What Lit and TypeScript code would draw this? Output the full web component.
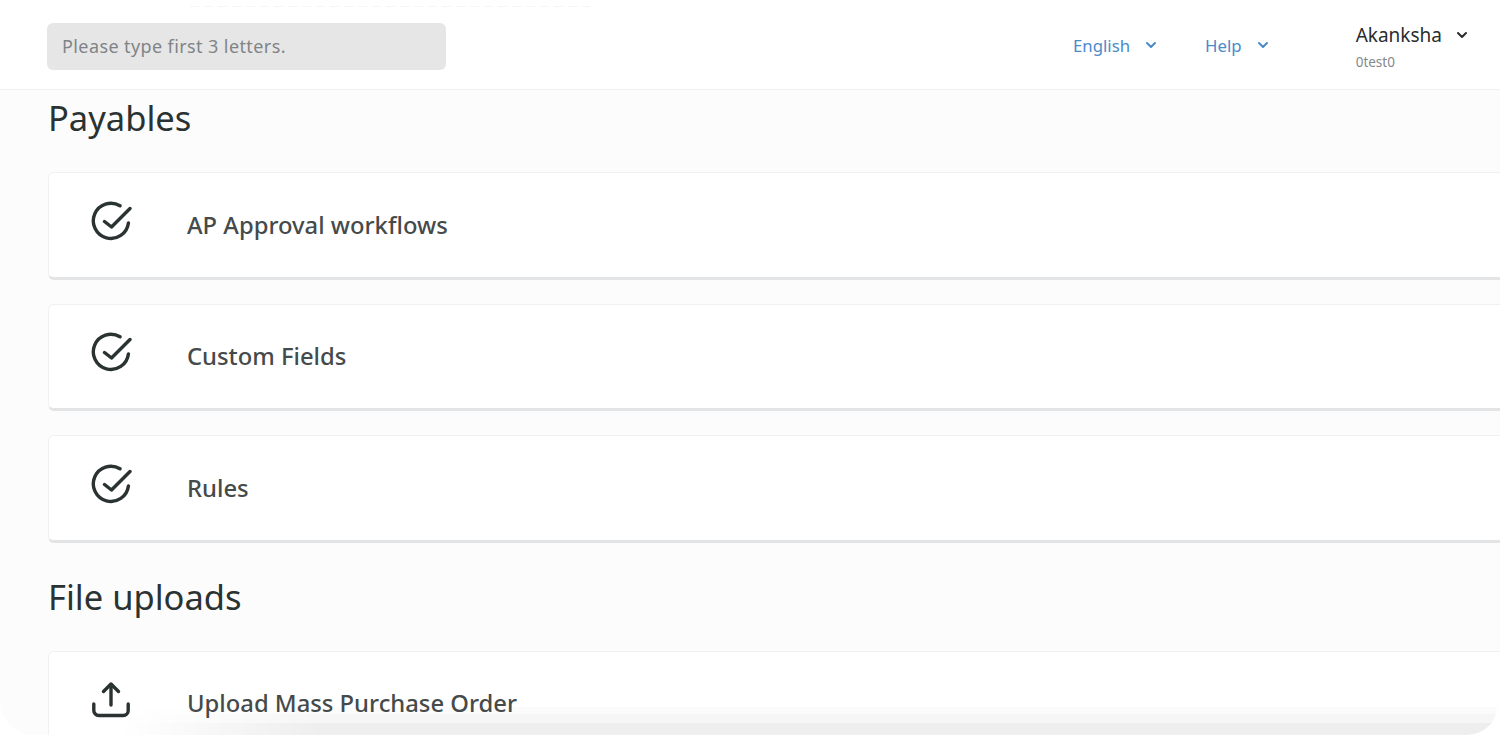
import { LitElement, css, html } from "lit";
import { customElement } from "lit/decorators.js";

const checkIcon = html`<svg class="icon" viewBox="0 0 42 42" fill="none" stroke="currentColor" stroke-width="3.4" stroke-linecap="round" stroke-linejoin="round">
  <path d="M30 5.8A17.6 17.6 0 1 0 38.4 23" />
  <path d="M14.5 21.5l7 5.5L40 8.5" />
</svg>`;

const uploadIcon = html`<svg class="icon" viewBox="0 0 42 42" fill="none" stroke="currentColor" stroke-width="3.4" stroke-linecap="round" stroke-linejoin="round">
  <path d="M21 27V6.5" />
  <path d="M13.5 13.5L21 6l7.5 7.5" />
  <path d="M3.8 26v6.5a5 5 0 0 0 5 5h24.4a5 5 0 0 0 5-5V26" />
</svg>`;

const chevron = html`<svg class="chevron" viewBox="0 0 12 8" fill="none" stroke="currentColor" stroke-width="2" stroke-linecap="round" stroke-linejoin="round">
  <path d="M2 2l4 4 4-4" />
</svg>`;

const sections = [
  {
    title: "Payables",
    icon: checkIcon,
    items: ["AP Approval workflows", "Custom Fields", "Rules"],
  },
  {
    title: "File uploads",
    icon: uploadIcon,
    items: ["Upload Mass Purchase Order"],
  },
];

@customElement("app-root")
export class AppRoot extends LitElement {
  static styles = css`
    * {
      box-sizing: border-box;
    }

    :host {
      display: block;
      height: 742px;
      overflow: hidden;
      background: #ffffff;
      color: #2b3232;
      font-family: "Noto Sans", "Open Sans", sans-serif;
    }

    .frame {
      position: relative;
      height: 735px;
      overflow: hidden;
      border-radius: 0 0 34px 34px;
      background: #fcfcfc;
    }

    .topbar {
      position: relative;
      display: flex;
      align-items: center;
      justify-content: space-between;
      height: 90px;
      padding: 0 32px 0 47px;
      background: #ffffff;
      border-bottom: 1px solid #efefef;
    }

    .scrap {
      position: absolute;
      left: 190px;
      top: 6px;
      width: 400px;
      height: 1px;
      background: repeating-linear-gradient(90deg, #f5f5f5 0 9px, transparent 9px 14px);
    }

    .search {
      display: flex;
      align-items: center;
      width: 399px;
      height: 47px;
      margin-top: 3px;
      padding-left: 15px;
      border-radius: 6px;
      background: #e6e6e7;
      color: #808486;
      font-size: 18px;
      letter-spacing: 0.4px;
    }

    .menus {
      display: flex;
      align-items: center;
    }

    .menu {
      display: flex;
      align-items: center;
      gap: 15px;
      margin-right: 48px;
      margin-top: 1px;
      color: #4a8bc9;
      font-size: 16.8px;
    }

    .menu.last {
      margin-right: 87px;
    }

    .chevron {
      width: 12px;
      height: 8px;
    }

    .user {
      display: flex;
      flex-direction: column;
      gap: 7px;
      margin-top: 5px;
    }

    .user-name {
      display: flex;
      align-items: center;
      gap: 14px;
      color: #2a2d2e;
      font-size: 19px;
      line-height: 24px;
    }

    .user-org {
      color: #85888a;
      font-size: 13.5px;
      line-height: 17px;
    }

    .content {
      padding: 8px 0 0 48px;
      margin-right: -20px;
    }

    h2 {
      margin: 0;
      font-size: 34.5px;
      font-weight: 400;
      line-height: 40px;
    }

    .list {
      display: flex;
      flex-direction: column;
      gap: 24px;
      margin: 34px 0 34px;
    }

    .card {
      display: flex;
      align-items: center;
      gap: 55px;
      height: 107.5px;
      padding: 0 0 0 41px;
      border: 1px solid #f1f1f1;
      border-bottom: 3px solid #e3e4e5;
      border-radius: 6px;
      background: #ffffff;
      font-size: 23.8px;
      font-weight: 500;
    }

    .icon {
      position: relative;
      z-index: 1;
      flex: none;
      width: 42px;
      height: 42px;
      margin-top: -8px;
    }

    .card span {
      position: relative;
      z-index: 1;
      color: #454a4a;
    }

    .fade {
      position: absolute;
      left: 0;
      right: 3px;
      bottom: 0;
      height: 28px;
      border-radius: 0 0 34px 0;
      background: linear-gradient(#fbfbfb 0 7px, #f6f6f6 7px 16px, #eeeeee 16px);
      -webkit-mask-image: linear-gradient(90deg, transparent 120px, #000 320px);
      mask-image: linear-gradient(90deg, transparent 120px, #000 320px);
      pointer-events: none;
    }
  `;

  render() {
    return html`
      <div class="frame">
        <header class="topbar">
          <div class="scrap"></div>
          <div class="search">Please type first 3 letters.</div>
          <div class="menus">
            <div class="menu">English ${chevron}</div>
            <div class="menu last">Help ${chevron}</div>
            <div class="user">
              <div class="user-name">Akanksha ${chevron}</div>
              <div class="user-org">0test0</div>
            </div>
          </div>
        </header>
        <main class="content">
          ${sections.map(
            (section) => html`
              <h2>${section.title}</h2>
              <div class="list">
                ${section.items.map(
                  (item) => html`
                    <div class="card">
                      ${section.icon}
                      <span>${item}</span>
                    </div>
                  `
                )}
              </div>
            `
          )}
        </main>
        <div class="fade"></div>
      </div>
    `;
  }
}
